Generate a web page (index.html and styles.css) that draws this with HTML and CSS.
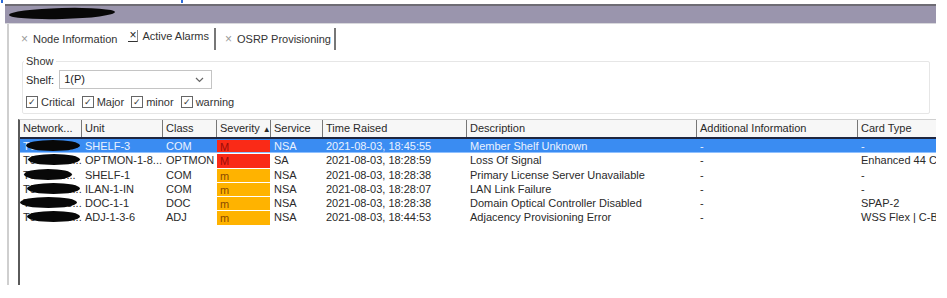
FILE: index.html
```html
<!DOCTYPE html>
<html lang="en">
<head>
  <meta charset="UTF-8" />
  <title>Active Alarms</title>
  <link rel="stylesheet" href="styles.css">
</head>
<body>
  <div class="topstrip"><span class="tick"></span><span class="tick tick-2"></span></div>
  <div class="window">
    <div class="titlebar"><span class="redact title-redact"></span></div>
    <div class="panel">
      <div class="tabs">
        <div class="tab"><span class="close">×</span>Node Information</div>
        <div class="tab active"><span class="close boxed">×</span>Active Alarms</div>
        <div class="tab"><span class="close">×</span>OSRP Provisioning</div>
      </div>

      <fieldset class="show">
        <legend>Show</legend>
        <div class="shelf-row">
          <label>Shelf:</label>
          <div class="select">1(P)
            <svg class="chev" width="9" height="6" viewBox="0 0 9 6"><path d="M1 1l3.5 3.5L8 1" fill="none" stroke="#666" stroke-width="1.2"/></svg>
          </div>
        </div>
        <div class="checks">
          <span class="chk"><span class="box">✓</span>Critical</span>
          <span class="chk"><span class="box">✓</span>Major</span>
          <span class="chk"><span class="box">✓</span>minor</span>
          <span class="chk"><span class="box">✓</span>warning</span>
        </div>
      </fieldset>

      <div class="grid">
        <div class="row head">
          <div>Network...</div><div>Unit</div><div>Class</div><div>Severity <span class="sort">▲</span></div><div>Service</div><div>Time Raised</div><div>Description</div><div>Additional Information</div><div>Card Type</div>
        </div>
        <div class="row selected">
          <div class="net">T0000000<span class="redact" style="left:6px;width:54px"></span></div><div>SHELF-3</div><div>COM</div><div class="sev major">M</div><div>NSA</div><div>2021-08-03, 18:45:55</div><div>Member Shelf Unknown</div><div>-</div><div>-</div>
        </div>
        <div class="row">
          <div class="net">T0000000...<span class="redact" style="left:8px;width:52px"></span></div><div>OPTMON-1-8...</div><div>OPTMON</div><div class="sev major">M</div><div>SA</div><div>2021-08-03, 18:28:59</div><div>Loss Of Signal</div><div>-</div><div>Enhanced 44 Channel Mux</div>
        </div>
        <div class="row">
          <div class="net">T000000...<span class="redact" style="left:4px;width:48px"></span></div><div>SHELF-1</div><div>COM</div><div class="sev minor">m</div><div>NSA</div><div>2021-08-03, 18:28:38</div><div>Primary License Server Unavailable</div><div>-</div><div>-</div>
        </div>
        <div class="row">
          <div class="net">T0000000...<span class="redact" style="left:7px;width:53px"></span></div><div>ILAN-1-IN</div><div>COM</div><div class="sev minor">m</div><div>NSA</div><div>2021-08-03, 18:28:07</div><div>LAN Link Failure</div><div>-</div><div>-</div>
        </div>
        <div class="row">
          <div class="net">T0000000...<span class="redact" style="left:0;width:57px"></span></div><div>DOC-1-1</div><div>DOC</div><div class="sev minor">m</div><div>NSA</div><div>2021-08-03, 18:28:38</div><div>Domain Optical Controller Disabled</div><div>-</div><div>SPAP-2</div>
        </div>
        <div class="row">
          <div class="net">T0000000...<span class="redact" style="left:7px;width:53px"></span></div><div>ADJ-1-3-6</div><div>ADJ</div><div class="sev minor">m</div><div>NSA</div><div>2021-08-03, 18:44:53</div><div>Adjacency Provisioning Error</div><div>-</div><div>WSS Flex | C-Band</div>
        </div>
      </div>
    </div>
  </div>
</body>
</html>
```

FILE: styles.css
```css
body {
  margin: 0;
  background: #fff;
  font-family: 'Liberation Sans', Arial, sans-serif;
  font-size: 11px;
  color: #2a2a2a;
}
.topstrip {
  height: 4px;
  display: flex;
}
.tick {
  width: 2px;
  height: 3px;
  margin-left: 1px;
  background: #2a6ad8;
}
.tick-2 {
  margin-left: 178px;
}
.window {
  width: 931px;
  margin-left: 5px;
}
.titlebar {
  position: relative;
  height: 17px;
  border-top: 2px solid #6e6c74;
  border-bottom: 1px solid #d8d8dc;
  background: #9a95ad;
}
.redact {
  position: absolute;
  background: #080808;
  border-radius: 50%;
}
.title-redact {
  left: 4px;
  top: 2px;
  width: 106px;
  height: 11px;
  transform: rotate(-1.5deg);
}
.panel {
  margin-left: 2px;
  border-left: 2px solid #cfcfcf;
  padding: 4px 0 13px 9px;
  height: 244px;
  overflow: hidden;
}

/* tabs */
.tabs {
  display: flex;
  height: 22px;
  align-items: center;
  padding-left: 2px;
}
.tab {
  display: flex;
  align-items: center;
  padding-right: 8px;
  font-size: 11px;
  color: #333;
}
.close {
  width: 9px;
  margin-right: 4px;
  color: #9a9a9a;
  font-size: 12px;
  text-align: center;
}
.close.boxed {
  color: #222;
  border-bottom: 1px solid #333;
  border-right: 1px solid #888;
  line-height: 10px;
  height: 11px;
}
.tab.active {
  padding-right: 5px;
  margin-left: 3px;
  border-right: 2px solid #777;
  height: 22px;
  align-items: flex-start;
  padding-top: 2px;
  box-sizing: border-box;
}
.tab.active + .tab {
  padding-left: 8px;
  padding-right: 3px;
  border-right: 2px solid #777;
  height: 22px;
}

/* show group */
.show {
  margin: 5px 6px 0 4px;
  padding: 0 0 5px 3px;
  border: 1px solid #e6e6e6;
  border-radius: 2px;
  height: 52px;
}
.show legend {
  padding: 0 2px;
  margin-left: -2px;
  color: #333;
}
.shelf-row {
  display: flex;
  align-items: center;
  gap: 5px;
  margin-top: 3px;
}
.select {
  position: relative;
  width: 147px;
  height: 17px;
  padding-left: 4px;
  border: 1px solid #c4c4c4;
  line-height: 17px;
  color: #222;
}
.chev {
  position: absolute;
  right: 7px;
  top: 6px;
}
.checks {
  display: flex;
  gap: 7px;
  margin-top: 7px;
}
.chk {
  display: flex;
  align-items: center;
  color: #333;
}
.box {
  width: 10px;
  height: 10px;
  margin-right: 3px;
  border: 1px solid #666;
  font-size: 9px;
  line-height: 10px;
  text-align: center;
  color: #333;
}

/* alarm table */
.grid {
  margin-top: 5px;
  border-left: 2px solid #5a5a5a;
  border-top: 1px solid #d0d0d0;
  width: 920px;
  height: 166px;
}
.row {
  display: grid;
  grid-template-columns: 62px 81px 54px 54px 52px 144px 230px 161px 120px;
  height: 14.3px;
  line-height: 14px;
  white-space: nowrap;
}
.row > div {
  padding-left: 3px;
  overflow: hidden;
}
.row.head {
  height: 17px;
  line-height: 17px;
  background: #f7f7f7;
  border-bottom: 2px solid #1e2640;
}
.row.head > div {
  border-right: 1px solid #777;
}
.sort {
  font-size: 8px;
}
.row.selected {
  background: #3a8cf2;
  color: #eaf2ff;
  height: 13.3px;
  border-bottom: 1px solid #8fc0ff;
}
.net {
  position: relative;
}
.net .redact {
  top: 1px;
  height: 11px;
}
.sev {
  margin: 1px 1px 0 0;
}
.sev.major {
  background: #fa2a17;
  color: #9a0e08;
}
.sev.minor {
  background: #ffb300;
  color: #8a4a00;
}
```
